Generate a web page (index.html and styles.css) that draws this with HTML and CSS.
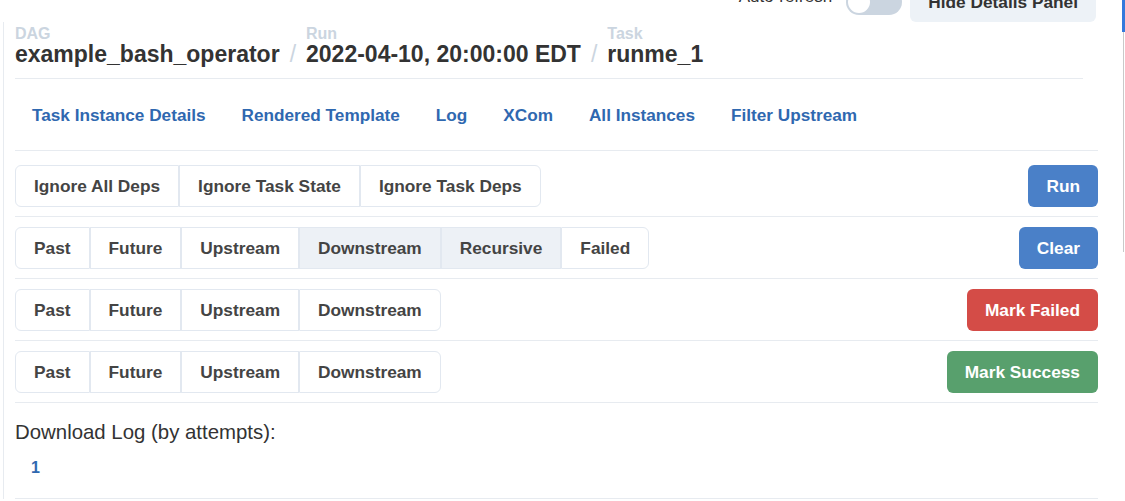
FILE: index.html
```html
<!DOCTYPE html>
<html lang="en">
<head>
<meta charset="utf-8">
<title>Task Instance</title>
<link rel="stylesheet" href="styles.css">
</head>
<body>
<div class="topbar">
  <span class="auto-label">Auto-refresh</span>
  <span class="switch"><span class="knob"></span></span>
  <button class="hide-btn">Hide Details Panel</button>
</div>
<div class="panel">
  <div class="breadcrumb">
    <div class="crumb">
      <div class="crumb-label">DAG</div>
      <div class="crumb-value">example_bash_operator</div>
    </div>
    <span class="crumb-sep">/</span>
    <div class="crumb">
      <div class="crumb-label">Run</div>
      <div class="crumb-value">2022-04-10, 20:00:00 EDT</div>
    </div>
    <span class="crumb-sep">/</span>
    <div class="crumb">
      <div class="crumb-label">Task</div>
      <div class="crumb-value">runme_1</div>
    </div>
  </div>
  <div class="header-divider"></div>
  <nav class="tabs">
    <a class="tab">Task Instance Details</a>
    <a class="tab">Rendered Template</a>
    <a class="tab">Log</a>
    <a class="tab">XCom</a>
    <a class="tab">All Instances</a>
    <a class="tab">Filter Upstream</a>
  </nav>
  <div class="action-row first">
    <div class="btn-group">
      <button class="opt">Ignore All Deps</button>
      <button class="opt">Ignore Task State</button>
      <button class="opt">Ignore Task Deps</button>
    </div>
    <button class="action blue">Run</button>
  </div>
  <div class="action-row">
    <div class="btn-group">
      <button class="opt">Past</button>
      <button class="opt">Future</button>
      <button class="opt">Upstream</button>
      <button class="opt active">Downstream</button>
      <button class="opt active">Recursive</button>
      <button class="opt">Failed</button>
    </div>
    <button class="action blue">Clear</button>
  </div>
  <div class="action-row">
    <div class="btn-group">
      <button class="opt">Past</button>
      <button class="opt">Future</button>
      <button class="opt">Upstream</button>
      <button class="opt">Downstream</button>
    </div>
    <button class="action red">Mark Failed</button>
  </div>
  <div class="action-row">
    <div class="btn-group">
      <button class="opt">Past</button>
      <button class="opt">Future</button>
      <button class="opt">Upstream</button>
      <button class="opt">Downstream</button>
    </div>
    <button class="action green">Mark Success</button>
  </div>
  <div class="download">
    <p class="download-title">Download Log (by attempts):</p>
    <a class="attempt">1</a>
  </div>
</div>
<div class="scroll-indicator"><div class="scroll-thumb"></div><div class="scroll-track"></div></div>
</body>
</html>
```

FILE: styles.css
```css
* { box-sizing: border-box; }
html, body {
  margin: 0;
  padding: 0;
  background: #ffffff;
  overflow: hidden;
}
body {
  font-family: "Liberation Sans", Arial, sans-serif;
  color: #333333;
  height: 501px;
  position: relative;
}
.topbar {
  height: 40px;
  margin-top: -18px;
  display: flex;
  justify-content: flex-end;
  align-items: center;
  padding-right: 29px;
}
.auto-label {
  font-size: 17px;
  color: #333;
  margin-right: 14px;
  margin-bottom: 10px;
}
.switch {
  width: 56px;
  height: 26px;
  border-radius: 13px;
  background: #cbd5e0;
  padding: 2px;
  display: flex;
  margin-right: 8px;
}
.knob {
  width: 22px;
  height: 22px;
  border-radius: 50%;
  background: #ffffff;
}
.hide-btn {
  height: 40px;
  border: none;
  border-radius: 6px;
  background: #edf2f7;
  font-family: inherit;
  font-weight: bold;
  font-size: 17.3px;
  color: #333;
  padding: 0 18px;
}
.panel {
  margin-left: 3px;
  margin-right: 27px;
  border-left: 1px solid #e7ebf0;
  padding-left: 11px;
}
.breadcrumb {
  display: flex;
  align-items: flex-end;
  padding-top: 4px;
}
.crumb-label {
  font-size: 16px;
  line-height: 16px;
  color: #cbd5e0;
  font-weight: bold;
}
.crumb-value {
  font-size: 23px;
  line-height: 24px;
  font-weight: bold;
  color: #333;
}
.crumb-sep {
  font-size: 23px;
  line-height: 24px;
  color: #cbd5e0;
  margin: 0 10px;
}
.header-divider {
  height: 1px;
  background: #e7ebf0;
  margin-top: 12px;
  margin-right: 15px;
}
.tabs {
  height: 72px;
  display: flex;
  align-items: center;
  padding-top: 1px;
  border-bottom: 1px solid #e7ebf0;
}
.tab {
  padding: 0 18px;
  font-size: 17.2px;
  font-weight: bold;
  color: #2f68b0;
  line-height: 24px;
}
.tab:first-child {
  padding-left: 17px;
}
.action-row {
  display: flex;
  justify-content: space-between;
  align-items: center;
  padding: 10px 0 9px;
  border-bottom: 1px solid #e7ebf0;
}
.action-row.first {
  padding-top: 14px;
}
.btn-group {
  display: flex;
}
.opt {
  height: 42px;
  padding: 0 18px;
  border: 1px solid #e2e8f0;
  background: #ffffff;
  font-family: inherit;
  font-weight: bold;
  font-size: 17.3px;
  color: #444;
  border-radius: 0;
}
.opt:first-child {
  border-radius: 6px 0 0 6px;
}
.opt:last-child {
  border-radius: 0 6px 6px 0;
}
.opt.active {
  background: #edf1f6;
}
.action {
  height: 42px;
  padding: 0 18px;
  border: none;
  border-radius: 6px;
  font-family: inherit;
  font-weight: bold;
  font-size: 17.3px;
  color: #ffffff;
}
.action.blue { background: #4a80c8; }
.action.red { background: #d44c47; }
.action.green { background: #58a06d; }
.download {
  padding: 17px 0 18px;
  border-bottom: 1px solid #e7ebf0;
}
.download-title {
  margin: 0;
  font-size: 20.4px;
  line-height: 24px;
  color: #333;
}
.attempt {
  display: block;
  margin-top: 12px;
  margin-left: 16px;
  font-size: 16px;
  line-height: 24px;
  font-weight: bold;
  color: #2f68b0;
}
.scroll-indicator {
  position: absolute;
  top: 0;
  right: 0;
  width: 3px;
  height: 252px;
}
.scroll-thumb {
  height: 32px;
  background: #3479dc;
}
.scroll-track {
  height: 220px;
  width: 1px;
  margin-left: 1px;
  background: #c9c9c9;
}
```
